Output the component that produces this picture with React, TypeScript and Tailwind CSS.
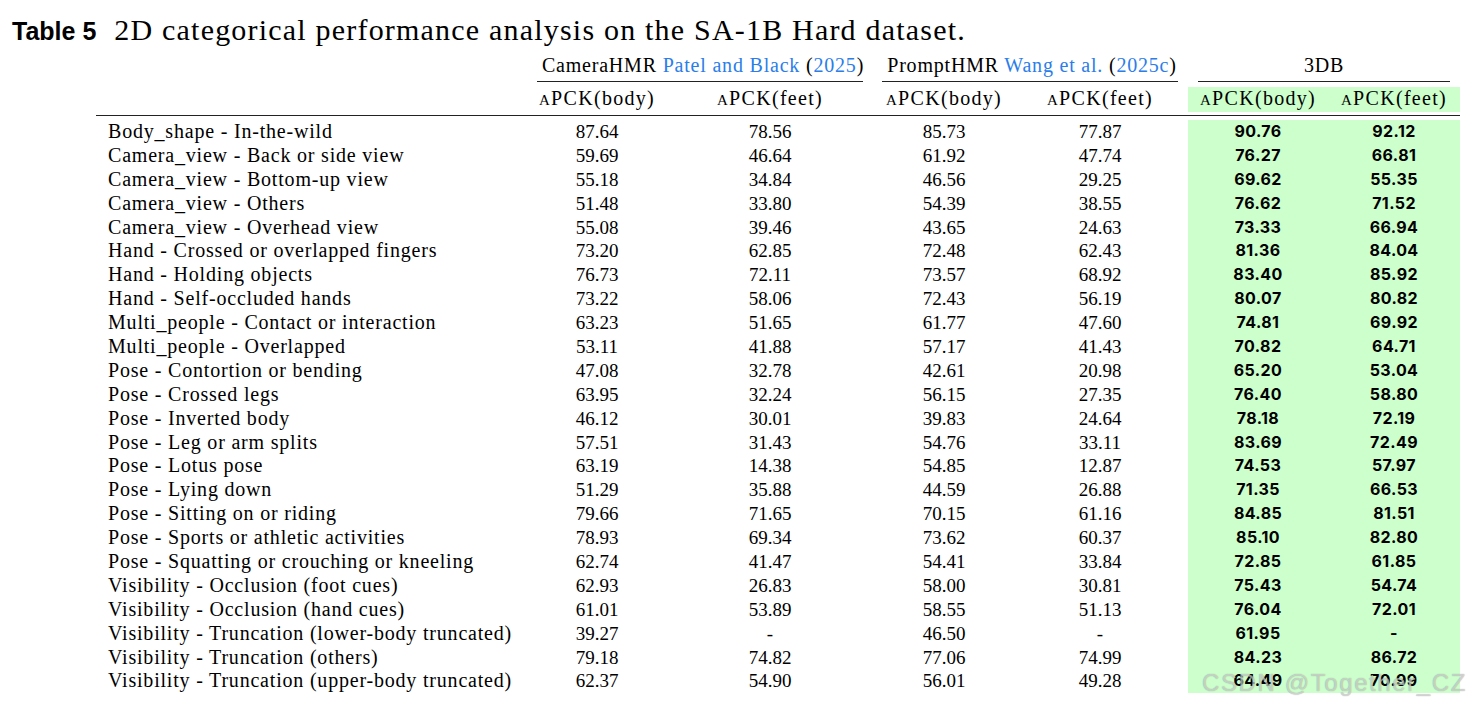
import React from 'react';

const rows: string[][] = [
  ['Body_shape - In-the-wild', '87.64', '78.56', '85.73', '77.87', '90.76', '92.12'],
  ['Camera_view - Back or side view', '59.69', '46.64', '61.92', '47.74', '76.27', '66.81'],
  ['Camera_view - Bottom-up view', '55.18', '34.84', '46.56', '29.25', '69.62', '55.35'],
  ['Camera_view - Others', '51.48', '33.80', '54.39', '38.55', '76.62', '71.52'],
  ['Camera_view - Overhead view', '55.08', '39.46', '43.65', '24.63', '73.33', '66.94'],
  ['Hand - Crossed or overlapped fingers', '73.20', '62.85', '72.48', '62.43', '81.36', '84.04'],
  ['Hand - Holding objects', '76.73', '72.11', '73.57', '68.92', '83.40', '85.92'],
  ['Hand - Self-occluded hands', '73.22', '58.06', '72.43', '56.19', '80.07', '80.82'],
  ['Multi_people - Contact or interaction', '63.23', '51.65', '61.77', '47.60', '74.81', '69.92'],
  ['Multi_people - Overlapped', '53.11', '41.88', '57.17', '41.43', '70.82', '64.71'],
  ['Pose - Contortion or bending', '47.08', '32.78', '42.61', '20.98', '65.20', '53.04'],
  ['Pose - Crossed legs', '63.95', '32.24', '56.15', '27.35', '76.40', '58.80'],
  ['Pose - Inverted body', '46.12', '30.01', '39.83', '24.64', '78.18', '72.19'],
  ['Pose - Leg or arm splits', '57.51', '31.43', '54.76', '33.11', '83.69', '72.49'],
  ['Pose - Lotus pose', '63.19', '14.38', '54.85', '12.87', '74.53', '57.97'],
  ['Pose - Lying down', '51.29', '35.88', '44.59', '26.88', '71.35', '66.53'],
  ['Pose - Sitting on or riding', '79.66', '71.65', '70.15', '61.16', '84.85', '81.51'],
  ['Pose - Sports or athletic activities', '78.93', '69.34', '73.62', '60.37', '85.10', '82.80'],
  ['Pose - Squatting or crouching or kneeling', '62.74', '41.47', '54.41', '33.84', '72.85', '61.85'],
  ['Visibility - Occlusion (foot cues)', '62.93', '26.83', '58.00', '30.81', '75.43', '54.74'],
  ['Visibility - Occlusion (hand cues)', '61.01', '53.89', '58.55', '51.13', '76.04', '72.01'],
  ['Visibility - Truncation (lower-body truncated)', '39.27', '-', '46.50', '-', '61.95', '-'],
  ['Visibility - Truncation (others)', '79.18', '74.82', '77.06', '74.99', '84.23', '86.72'],
  ['Visibility - Truncation (upper-body truncated)', '62.37', '54.90', '56.01', '49.28', '64.49', '70.99'],
];

const cols = 'grid grid-cols-[434px_134px_212px_136px_176px_140px_132px]';

function Metric({ part }: { part: string }) {
  return (
    <span>
      <span className="text-[15px]">A</span>PCK({part})
    </span>
  );
}

function Cite({ name, year }: { name: string; year: string }) {
  return (
    <>
      <span className="text-[#2b7de9]">{name}</span> (<span className="text-[#2b7de9]">{year}</span>)
    </>
  );
}

export default function App() {
  return (
    <div className="relative h-[706px] w-[1472px] overflow-hidden bg-white text-black [font-family:'Liberation_Serif',serif]">
      <div className="flex h-[46px] items-baseline pl-[12px] pt-[15px] leading-[30px]">
        <span className="text-[25px] font-bold [font-family:'Liberation_Sans',sans-serif]">Table 5</span>
        <span className="ml-[18px] text-[30px] tracking-[1.2px]">
          2D categorical performance analysis on the SA-1B Hard dataset.
        </span>
      </div>

      <div className="ml-[96px] w-[1364px] text-[19px]">
        {/* group headers */}
        <div className={`${cols} pt-[7px]`}>
          <div />
          <div className="col-span-2 flex flex-col">
            <div className="h-[24px] text-center text-[20px] leading-[24px] tracking-[0.8px]">
              CameraHMR <Cite name="Patel and Black" year="2025" />
            </div>
            <div className="mt-[4px] ml-[7px] mr-[13px] h-px bg-[#222]" />
          </div>
          <div className="col-span-2 flex flex-col">
            <div className="h-[24px] text-center text-[20px] leading-[24px] tracking-[0.8px]">
              PromptHMR <Cite name="Wang et al." year="2025c" />
            </div>
            <div className="mt-[4px] ml-[6px] mr-[10px] h-px bg-[#222]" />
          </div>
          <div className="col-span-2 flex flex-col">
            <div className="h-[24px] text-center text-[20px] leading-[24px] tracking-[0.8px]">3DB</div>
            <div className="mt-[4px] ml-[10px] mr-[10px] h-px bg-[#222]" />
          </div>
        </div>

        {/* metric headers */}
        <div className={`${cols} mt-[5px] h-[24px] items-stretch text-[20px] leading-[23px] tracking-[1.3px]`}>
          <div />
          <div className="text-center"><Metric part="body" /></div>
          <div className="text-center"><Metric part="feet" /></div>
          <div className="text-center"><Metric part="body" /></div>
          <div className="text-center"><Metric part="feet" /></div>
          <div className="bg-[#ccffcc] text-center"><Metric part="body" /></div>
          <div className="bg-[#ccffcc] text-center"><Metric part="feet" /></div>
        </div>

        <div className="mt-[4px] h-px bg-[#222]" />

        {/* body */}
        <div className="mt-[4px] flex flex-col">
          {rows.map((r) => (
            <div key={r[0]} className={`${cols} h-[23.9px] leading-[23.9px]`}>
              <div className="whitespace-nowrap pl-[12px] text-[20px] tracking-[0.8px]">{r[0]}</div>
              {r.slice(1, 5).map((v, i) => (
                <div key={i} className="text-center">{v}</div>
              ))}
              {r.slice(5).map((v, i) => (
                <div
                  key={i}
                  className="bg-[#ccffcc] text-center text-[16px] font-bold tracking-[0.4px] [font-family:Inter,sans-serif]"
                >
                  {v}
                </div>
              ))}
            </div>
          ))}
        </div>
      </div>

      <div className="absolute left-[1202px] top-[665px] text-[24px] tracking-[1.6px] text-[rgba(235,235,235,0.65)] [font-family:'Liberation_Sans',sans-serif] [text-shadow:0_0_1px_rgba(0,0,0,0.4)]">
        CSDN @Together_CZ
      </div>
    </div>
  );
}
